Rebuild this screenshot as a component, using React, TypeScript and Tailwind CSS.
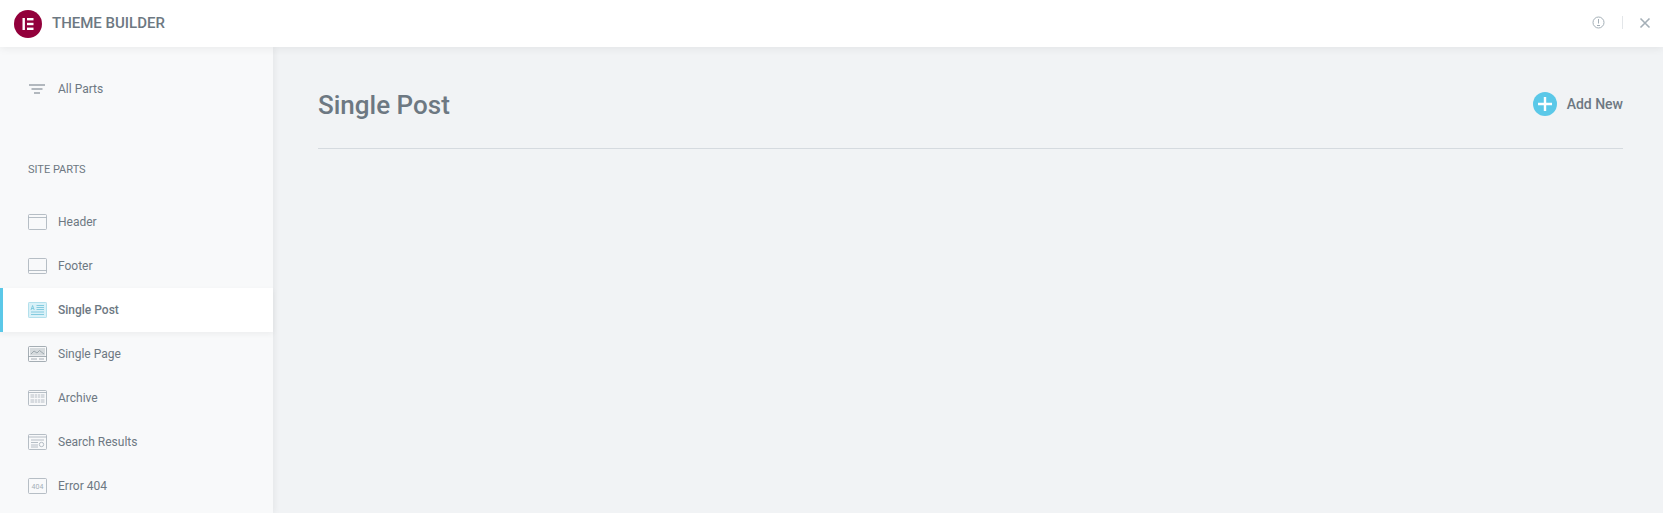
import type { ReactNode } from 'react';

function PartIcon({ children, color = '#a4afb7' }: { children?: ReactNode; color?: string }) {
  return (
    <svg width="19" height="16" viewBox="0 0 19 16" fill="none" stroke={color} strokeWidth="0.8" className="shrink-0">
      <rect x="0.5" y="0.5" width="18" height="15" rx="1" />
      {children}
    </svg>
  );
}

const parts: { label: string; icon: ReactNode; active?: boolean }[] = [
  { label: 'Header', icon: <PartIcon><path d="M0.5 3.5h18" /></PartIcon> },
  { label: 'Footer', icon: <PartIcon><path d="M0.5 12.5h18" /></PartIcon> },
  {
    label: 'Single Post',
    active: true,
    icon: (
      <PartIcon color="#6ec1d8">
        <rect x="0.5" y="0.5" width="18" height="15" rx="1" fill="#d9f1f8" stroke="none" />
        <path d="M3 8l1.6-4.5L6.2 8M3.6 6.5h2M8.5 3.5h7.5M8.5 5.5h7.5M8.5 7.5h7.5M3 10h13M3 12.5h13" />
      </PartIcon>
    ),
  },
  {
    label: 'Single Page',
    icon: (
      <PartIcon color="#8f9aa2">
        <rect x="2" y="2" width="15" height="7.5" fill="#d5dadd" stroke="none" />
        <path d="M3 8l3-3 3 2 2.5-2.5L16 8M0.5 10.5h18M3 13h6M11 13h5" />
      </PartIcon>
    ),
  },
  {
    label: 'Archive',
    icon: (
      <PartIcon>
        <path d="M0.5 2.5h18M2.5 5h14M2.5 7h14M2.5 10h14M2.5 12h14" />
        <path d="M6.5 4v9M9.5 4v9M12.5 4v9" stroke="#f8f9fa" strokeWidth="0.7" />
      </PartIcon>
    ),
  },
  {
    label: 'Search Results',
    icon: (
      <PartIcon>
        <path d="M0.5 3h18M3 6h13M3 8.5h7M3 11h7M3 13h7" />
        <circle cx="13.5" cy="10.5" r="2.2" />
      </PartIcon>
    ),
  },
  {
    label: 'Error 404',
    icon: (
      <PartIcon>
        <text x="9.5" y="10.5" textAnchor="middle" fontSize="7" fontFamily="Roboto, sans-serif" stroke="none" fill="#a4afb7">
          404
        </text>
      </PartIcon>
    ),
  },
];

export default function App() {
  return (
    <div className="flex h-[513px] w-[1663px] flex-col overflow-hidden bg-[#f1f3f5] font-['Roboto',sans-serif] text-[#6d7882]">
      <header className="relative z-10 flex h-[47px] shrink-0 items-center justify-between bg-white pl-[14px] pr-[12px] shadow-[0_2px_8px_rgba(0,0,0,0.06)]">
        <div className="flex items-center gap-[10px]">
          <svg width="28" height="28" viewBox="0 0 28 28">
            <circle cx="14" cy="14" r="14" fill="#92003b" />
            <rect x="8.5" y="8" width="2.4" height="12" fill="#fff" />
            <rect x="13" y="8" width="6.5" height="2.4" fill="#fff" />
            <rect x="13" y="12.8" width="6.5" height="2.4" fill="#fff" />
            <rect x="13" y="17.6" width="6.5" height="2.4" fill="#fff" />
          </svg>
          <h1 className="text-[15px] font-medium">THEME BUILDER</h1>
        </div>
        <div className="mb-[2px] flex items-center text-[#a4afb7]">
          <svg width="13" height="13" viewBox="0 0 13 13" fill="none" stroke="currentColor" strokeWidth="1">
            <circle cx="6.5" cy="6.5" r="5.5" />
            <path d="M6.5 3v4.5M5 9.5h3" />
          </svg>
          <span className="ml-[17px] h-[13px] w-px bg-[#e3e6e9]" />
          <svg className="ml-[16px]" width="12" height="12" viewBox="0 0 12 12" fill="none" stroke="currentColor" strokeWidth="1.6">
            <path d="M1.5 1.5l9 9M10.5 1.5l-9 9" />
          </svg>
        </div>
      </header>

      <div className="flex min-h-0 flex-1">
        <aside className="w-[273px] shrink-0 bg-[#f8f9fa] shadow-[2px_0_6px_rgba(0,0,0,0.05)]">
          <div className="mt-[20px] flex h-[44px] items-center gap-[13px] pl-[29px] text-[12px]">
            <svg width="16" height="10" viewBox="0 0 16 10" stroke="#6d7882" strokeWidth="1.2" className="shrink-0">
              <path d="M0 1h16M2.5 5h11M5 9h6" />
            </svg>
            <span>All Parts</span>
          </div>
          <div className="mt-[49px] pl-[28px] text-[11px] leading-[20px]">SITE PARTS</div>
          <nav className="mt-[20px]">
            {parts.map((part) => (
              <div
                key={part.label}
                className={`flex h-[44px] items-center gap-[11px] pl-[28px] text-[12px] ${
                  part.active ? 'relative bg-white shadow-[0_2px_6px_rgba(0,0,0,0.05)]' : ''
                }`}
              >
                {part.active && <span className="absolute inset-y-0 left-0 w-[3px] bg-[#5bc8e8]" />}
                {part.icon}
                <span className={part.active ? 'font-medium' : ''}>{part.label}</span>
              </div>
            ))}
          </nav>
        </aside>

        <main className="flex-1 pl-[45px] pr-[40px]">
          <div className="flex h-[102px] items-center justify-between border-b border-[#d5dadf] pt-[13px]">
            <h2 className="mt-[2px] text-[26px] font-medium">Single Post</h2>
            <button className="flex items-center gap-[10px] text-[14px] font-medium">
              <span className="flex h-[24px] w-[24px] items-center justify-center rounded-full bg-[#5bc8e8]">
                <svg width="14" height="14" viewBox="0 0 14 14" stroke="#fff" strokeWidth="2.4">
                  <path d="M7 0v14M0 7h14" />
                </svg>
              </span>
              Add New
            </button>
          </div>
        </main>
      </div>
    </div>
  );
}
